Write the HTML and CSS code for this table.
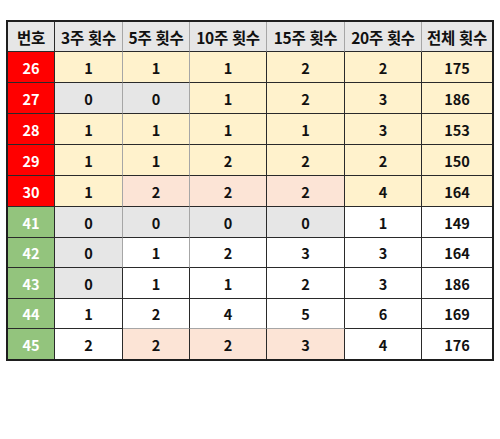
FILE: index.html
```html
<!DOCTYPE html>
<html lang="ko">
<head>
<meta charset="utf-8">
<link rel="stylesheet" href="styles.css">
</head>
<body>
<div class="sheet">
  <div class="c h">번호</div><div class="c h sv">3주 횟수</div><div class="c h sv">5주 횟수</div><div class="c h sv">10주 횟수</div><div class="c h sv">15주 횟수</div><div class="c h sv">20주 횟수</div><div class="c h last">전체 횟수</div>

  <div class="c red">26</div><div class="c y sv">1</div><div class="c y sv">1</div><div class="c y">1</div><div class="c y">2</div><div class="c y">2</div><div class="c y last">175</div>
  <div class="c red">27</div><div class="c g sv">0</div><div class="c g sv">0</div><div class="c y">1</div><div class="c y">2</div><div class="c y">3</div><div class="c y last">186</div>
  <div class="c red">28</div><div class="c y sv">1</div><div class="c y sv">1</div><div class="c y">1</div><div class="c y">1</div><div class="c y">3</div><div class="c y last">153</div>
  <div class="c red">29</div><div class="c y sv">1</div><div class="c y sv">1</div><div class="c y">2</div><div class="c y">2</div><div class="c y">2</div><div class="c y last">150</div>
  <div class="c red">30</div><div class="c y sv">1</div><div class="c p sv">2</div><div class="c p">2</div><div class="c p">2</div><div class="c y">4</div><div class="c y last">164</div>

  <div class="c grn">41</div><div class="c g sv">0</div><div class="c g sv">0</div><div class="c g">0</div><div class="c g">0</div><div class="c">1</div><div class="c last">149</div>
  <div class="c grn short">42</div><div class="c g sv short">0</div><div class="c sv short">1</div><div class="c short">2</div><div class="c short">3</div><div class="c short">3</div><div class="c last short">164</div>
  <div class="c grn">43</div><div class="c g">0</div><div class="c">1</div><div class="c">1</div><div class="c">2</div><div class="c">3</div><div class="c last">186</div>
  <div class="c grn short">44</div><div class="c short">1</div><div class="c short sb">2</div><div class="c short sb">4</div><div class="c short sb">5</div><div class="c short">6</div><div class="c last short">169</div>
  <div class="c grn end">45</div><div class="c end">2</div><div class="c p end">2</div><div class="c p end">2</div><div class="c p end">3</div><div class="c end">4</div><div class="c last end">176</div>
</div>
</body>
</html>
```

FILE: styles.css
```css
html, body {
  margin: 0;
  padding: 0;
  background: #ffffff;
}

body {
  font-family: "Noto Sans CJK KR", "Noto Sans", sans-serif;
}

.sheet {
  margin: 20px 0 0 6px;
  width: 488px;
  box-sizing: border-box;
  border: 2px solid #1e1e1e;
  display: grid;
  grid-template-columns: 47px 68px 67px 77px 78px 77px 70px;
  grid-auto-rows: auto;
}

.c {
  box-sizing: border-box;
  height: 31px;
  border-right: 1px solid #2a2a2a;
  border-bottom: 1px solid #2a2a2a;
  display: flex;
  align-items: center;
  justify-content: center;
  font-size: 14.5px;
  font-weight: 700;
  color: #111;
  background: #ffffff;
  white-space: nowrap;
}

.c.last {
  border-right: none;
}

.c.short {
  height: 30px;
}

.c.end {
  height: 30px;
  border-bottom: none;
}

.c.h {
  height: 30px;
  background: #e6e6e6;
  font-size: 15.5px;
  letter-spacing: -0.3px;
}

.c.h.sv {
  border-right-color: #a6a6a6;
}

.c.sv {
  border-right-color: #a6a6a6;
}

.c.sb {
  border-bottom-color: #a6a6a6;
}

.c.red {
  background: #ff0000;
  color: #ffffff;
}

.c.grn {
  background: #93c47d;
  color: #ffffff;
}

.c.y {
  background: #fff2cc;
}

.c.g {
  background: #e6e6e6;
}

.c.p {
  background: #fce4d6;
}
```
